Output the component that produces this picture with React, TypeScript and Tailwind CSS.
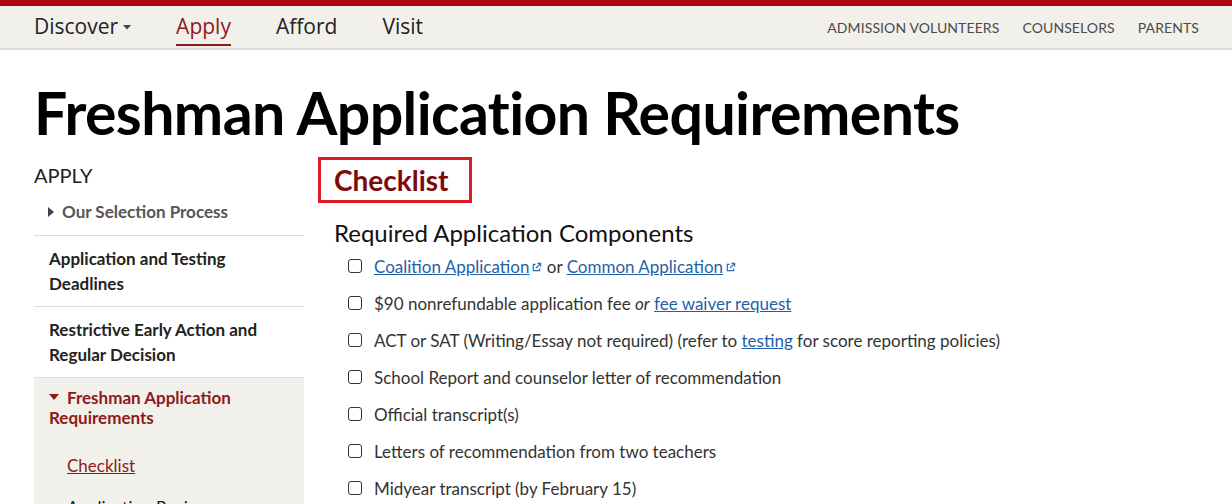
import React from "react";

function ExtIcon() {
  return (
    <svg className="inline-block ml-[2px] mb-[2px]" width="11" height="11" viewBox="0 0 12 12" fill="none" stroke="#2a6ab0" strokeWidth="1.3">
      <path d="M5 2.5H2.5v7h7V7" />
      <path d="M7 1.5h3.5V5M10.5 1.5L5.5 6.5" />
    </svg>
  );
}

function Box() {
  return <span className="mt-[3px] h-[14px] w-[14px] shrink-0 rounded-[3px] border border-[#333] bg-white" />;
}

const items: React.ReactNode[] = [
  <>
    <a className="text-[#1f5fa8] underline">Coalition Application</a>
    <ExtIcon /> or <a className="text-[#1f5fa8] underline">Common Application</a>
    <ExtIcon />
  </>,
  <>
    $90 nonrefundable application fee <i>or</i> <a className="text-[#1f5fa8] underline">fee waiver request</a>
  </>,
  <>
    ACT or SAT (Writing/Essay not required) (refer to <a className="text-[#1f5fa8] underline">testing</a> for score reporting policies)
  </>,
  <>School Report and counselor letter of recommendation</>,
  <>Official transcript(s)</>,
  <>Letters of recommendation from two teachers</>,
  <>Midyear transcript (by February 15)</>,
];

export default function App() {
  return (
    <div className="h-[504px] overflow-hidden bg-white font-['Lato',sans-serif] text-[#222]">
      <div className="h-[6px] bg-[#ad0a14]" />
      <nav className="flex h-[44px] items-center justify-between border-b-2 border-[#dcd9d2] bg-[#f2f0eb] pl-[34px] pr-[33px] font-['Open_Sans',sans-serif]">
        <div className="mb-[2px] flex items-center gap-[45px] text-[21px] leading-[30px] text-[#222]">
          <span className="flex items-center">
            Discover
            <svg className="ml-[5px] mt-[2px]" width="8" height="5" viewBox="0 0 8 5">
              <path d="M0 0h8L4 4.5z" fill="#444" />
            </svg>
          </span>
          <span className="relative text-[#8f1a1a]">
            Apply
            <span className="absolute left-0 right-0 top-[33px] h-[2px] bg-[#8f1a1a]" />
          </span>
          <span>Afford</span>
          <span>Visit</span>
        </div>
        <div className="flex gap-[23px] text-[14px] text-[#4a4a4a] font-['Lato',sans-serif] tracking-[0.1px]">
          <span>ADMISSION VOLUNTEERS</span>
          <span>COUNSELORS</span>
          <span>PARENTS</span>
        </div>
      </nav>

      <div className="px-[34px]">
        <h1 className="mt-[27px] text-[59px] font-bold leading-[72px] text-black tracking-[-0.6px]">
          Freshman Application Requirements
        </h1>

        <div className="mt-[8px] flex">
          <aside className="w-[270px] shrink-0">
            <div className="mt-[4px] text-[20px] leading-[28px] text-[#222]">APPLY</div>
            <div className="flex items-center border-b border-[#ddd] pb-[10px] pl-[14px] pt-[10px] text-[17px] font-bold text-[#555]">
              <svg width="6" height="10" viewBox="0 0 6 10" className="mr-[8px]">
                <path d="M0 0l6 5-6 5z" fill="#444" />
              </svg>
              Our Selection Process
            </div>
            <div className="border-b border-[#ddd] py-[10px] pl-[15px] text-[17px] font-bold leading-[25px] text-[#222]">
              Application and Testing
              <br />
              Deadlines
            </div>
            <div className="border-b border-[#ddd] py-[10px] pl-[15px] text-[17px] font-bold leading-[25px] text-[#222]">
              Restrictive Early Action and
              <br />
              Regular Decision
            </div>
            <div className="bg-[#f2f0eb] pb-[40px] pl-[15px] pt-[10px]">
              <div className="text-[17px] font-bold leading-[20px] text-[#8f1a1a]">
                <svg width="10" height="6" viewBox="0 0 10 6" className="mb-[4px] mr-[8px] inline-block">
                  <path d="M0 0h10L5 6z" fill="#8f1a1a" />
                </svg>
                Freshman Application
                <br />
                Requirements
              </div>
              <div className="mt-[25px] pl-[18px] text-[17px] text-[#8f1a1a] underline">Checklist</div>
              <div className="mt-[17px] pl-[18px] text-[17px] text-[#222]">Application Review</div>
            </div>
          </aside>

          <main className="ml-[14px] flex-1">
            <div className="inline-block border-[3px] border-[#e01b24] pl-[13px] pr-[20px] py-[3px]">
              <h2 className="text-[28px] font-bold leading-[34px] text-[#7d0a0a]">Checklist</h2>
            </div>
            <div className="ml-[16px]">
              <h3 className="mt-[15px] text-[24px] leading-[30px] text-[#111]">Required Application Components</h3>
              <ul className="mt-[8px]">
                {items.map((it, i) => (
                  <li key={i} className="flex h-[37px] gap-[12px] pl-[14px] text-[17px] leading-[22px] text-[#333]">
                    <Box />
                    <span>{it}</span>
                  </li>
                ))}
              </ul>
            </div>
          </main>
        </div>
      </div>
    </div>
  );
}
